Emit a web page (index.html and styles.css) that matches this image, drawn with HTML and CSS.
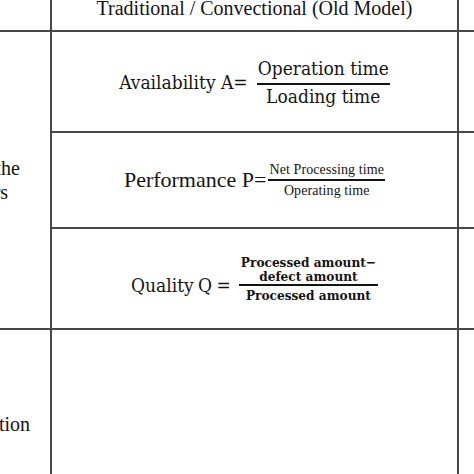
FILE: index.html
```html
<!DOCTYPE html>
<html>
<head>
<meta charset="utf-8">
<link rel="stylesheet" href="styles.css">
</head>
<body>
<div class="sheet">
  <div class="cell"></div>
  <div class="cell head">Traditional / Convectional (Old Model)</div>
  <div class="cell"></div>

  <div class="cell side"><div class="side-text">Calculating the<br>OEE factors</div></div>

  <div class="cell formula">
    <span class="cam label-a">Availability A=</span>
    <span class="frac cam frac-a">
      <span class="num">Operation time</span>
      <span class="den">Loading time</span>
    </span>
  </div>
  <div class="cell"></div>

  <div class="cell formula">
    <span class="times label-p">Performance P=</span>
    <span class="frac times frac-p">
      <span class="num">Net Processing time</span>
      <span class="den">Operating time</span>
    </span>
  </div>
  <div class="cell"></div>

  <div class="cell formula">
    <span class="cam label-q">Quality Q =</span>
    <span class="frac cam frac-q">
      <span class="num">Processed amount&minus;<br>defect amount</span>
      <span class="den">Processed amount</span>
    </span>
  </div>
  <div class="cell"></div>

  <div class="cell side-last">OEE Calculation</div>
  <div class="cell"></div>
  <div class="cell"></div>
</div>
</body>
</html>
```

FILE: styles.css
```css
html, body {
  margin: 0;
  padding: 0;
  background: #fff;
  overflow: hidden;
}

.sheet {
  display: grid;
  grid-template-columns: 182px 405px 15px;
  grid-template-rows: 50px 99px 94px 99px 144px;
  gap: 2px;
  background: #474747;
  margin-left: -132px;
  margin-top: -20px;
  color: #141414;
  font-family: "Liberation Serif", "Times New Roman", serif;
}

.cell {
  background: #fff;
  min-width: 0;
  overflow: hidden;
}

.head {
  font-size: 20px;
  line-height: 20px;
  padding-top: 18px;
  text-align: center;
  white-space: nowrap;
}

.side {
  grid-column: 1;
  grid-row: 2 / span 3;
  display: flex;
  align-items: center;
  justify-content: center;
}

.side-text {
  font-size: 20px;
  line-height: 24px;
  text-align: center;
  white-space: nowrap;
}

.side-last {
  font-size: 20px;
  line-height: 24px;
  padding-top: 82px;
  padding-left: 6px;
  text-align: center;
  white-space: nowrap;
}

.formula {
  display: flex;
  align-items: center;
  justify-content: center;
  white-space: nowrap;
}

.cam {
  font-family: "DejaVu Serif Condensed", "DejaVu Serif", serif;
  font-stretch: condensed;
}

.times {
  font-family: "Liberation Serif", "Times New Roman", serif;
}

.frac {
  display: inline-flex;
  flex-direction: column;
  align-items: center;
  text-align: center;
}

.frac .num {
  border-bottom: 2px solid #141414;
}

/* Availability */
.label-a {
  font-size: 19px;
  margin-right: 9px;
}
.frac-a {
  font-size: 19px;
  line-height: 22px;
}
.frac-a .num {
  padding: 0 1px 4px;
}

/* Performance */
.label-p {
  font-size: 22px;
  margin-right: 2px;
}
.frac-p {
  font-size: 14px;
  line-height: 16px;
  letter-spacing: 0.1px;
}
.frac-p .num {
  padding: 0 1px 1px;
}
.frac-p .den {
  padding-top: 2px;
}

/* Quality */
.label-q {
  font-size: 19px;
  word-spacing: -1px;
  margin-right: 8px;
  padding-top: 12px;
}
.frac-q {
  font-size: 13.5px;
  line-height: 14.5px;
  font-weight: bold;
}
.frac-q .num {
  padding: 0 2px 0;
  line-height: 14.5px;
}
.frac-q .den {
  padding-top: 2px;
}
```
